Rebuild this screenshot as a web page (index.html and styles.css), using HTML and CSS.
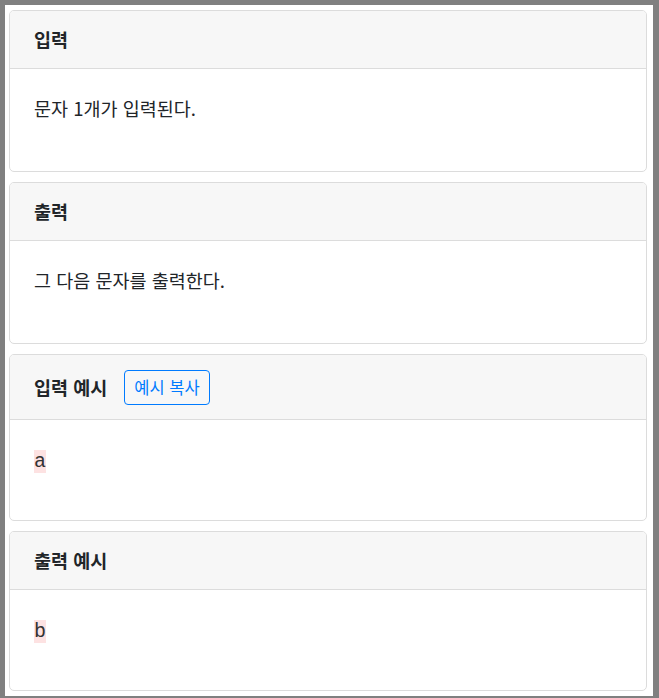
FILE: index.html
```html
<!DOCTYPE html>
<html lang="ko">
<head>
<meta charset="utf-8">
<title>문제</title>
<link rel="stylesheet" href="styles.css">
</head>
<body>
<div class="page">
  <section class="card">
    <div class="card-header"><h3 class="title">입력</h3></div>
    <div class="card-body text-body"><p>문자 1개가 입력된다.</p></div>
  </section>
  <section class="card">
    <div class="card-header"><h3 class="title">출력</h3></div>
    <div class="card-body text-body"><p>그 다음 문자를 출력한다.</p></div>
  </section>
  <section class="card">
    <div class="card-header"><h3 class="title">입력 예시</h3><button class="copy-btn" type="button">예시 복사</button></div>
    <div class="card-body sample-body"><code class="sample">a</code></div>
  </section>
  <section class="card">
    <div class="card-header"><h3 class="title">출력 예시</h3></div>
    <div class="card-body sample-body"><code class="sample">b</code></div>
  </section>
</div>
</body>
</html>
```

FILE: styles.css
```css
html, body {
  margin: 0;
  padding: 0;
}
body {
  background: #808080;
  padding: 5px 6px 5px 5px;
  font-family: "Noto Sans CJK KR", "Noto Sans", sans-serif;
  color: #212529;
}
.page {
  background: #ffffff;
  padding: 5px 6px 5px 4px;
  display: flex;
  flex-direction: column;
  gap: 10px;
}
.card {
  border: 1px solid #dcdcdc;
  border-radius: 5px;
  overflow: hidden;
  background: #fff;
}
.card-header {
  background: #f7f7f7;
  border-bottom: 1px solid #dcdcdc;
  padding: 12px 24px;
  display: flex;
  align-items: center;
  min-height: 33px;
}
.title {
  margin: 0;
  font-size: 18.5px;
  font-weight: 700;
  line-height: 33px;
  color: #212529;
}
.copy-btn {
  margin: 3px 0 2px 17px;
  height: 35px;
  padding: 0 9px;
  border: 1px solid #007bff;
  border-radius: 4px;
  background: transparent;
  color: #007bff;
  font-family: "Noto Sans CJK KR", "Noto Sans", sans-serif;
  font-size: 16.5px;
  line-height: 33px;
}
.card-body p {
  margin: 0;
  font-size: 18.5px;
  line-height: 27px;
}
.text-body {
  padding: 26px 24px 49px;
}
.sample-body {
  padding: 27px 24px 45px;
  line-height: 27px;
}
.sample {
  font-family: "Liberation Mono", monospace;
  font-size: 20px;
  background: #fde2e2;
  color: #333;
}
```
